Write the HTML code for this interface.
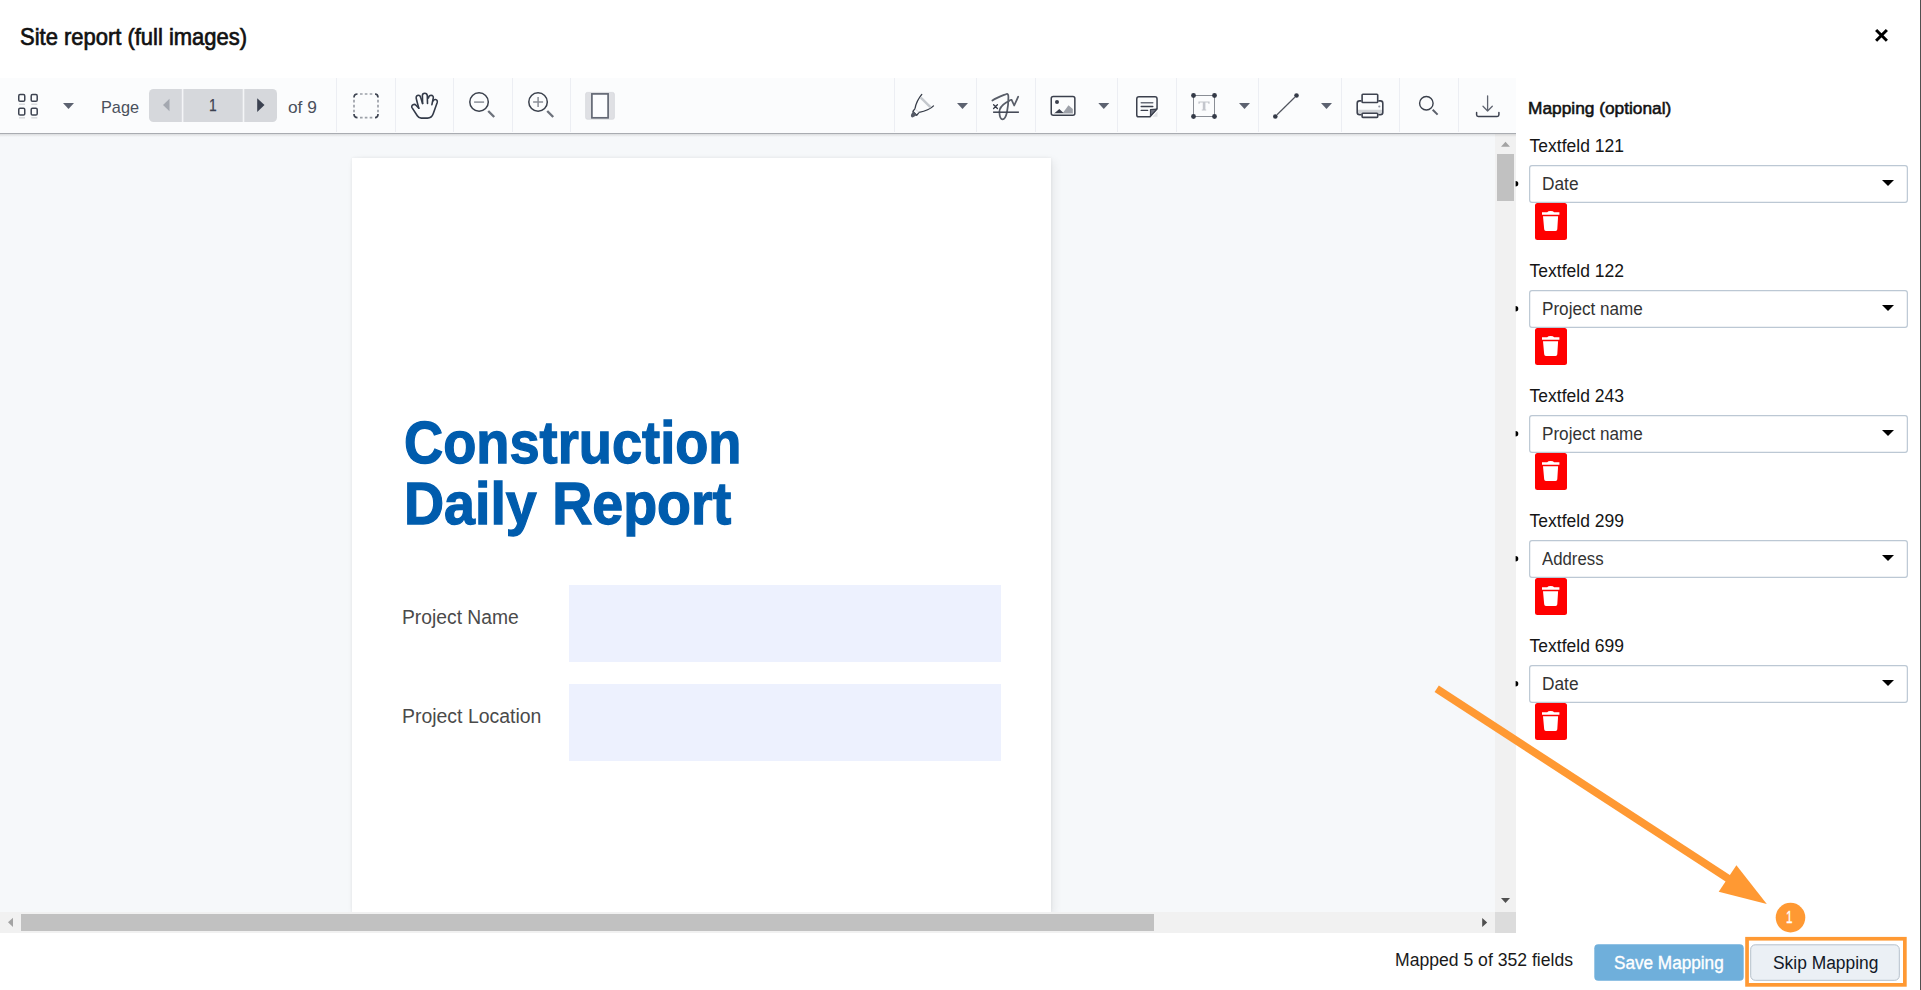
<!DOCTYPE html>
<html><head><meta charset="utf-8">
<style>
html,body{margin:0;padding:0;width:1921px;height:990px;overflow:hidden;background:#ffffff;}
body{position:relative;font-family:"Liberation Sans", sans-serif;}
.t{position:absolute;white-space:nowrap;line-height:1;transform-origin:0 0;}
.abs{position:absolute;}
</style></head><body>
<div class="abs" style="left:0;top:78px;width:1516px;height:55px;background:#fbfcfd;"></div>
<div class="abs" style="left:0;top:133px;width:1495px;height:779px;background:#f6f8fa;"></div>
<div class="abs" style="left:352px;top:158px;width:699px;height:754px;background:#ffffff;box-shadow:0 0 3px rgba(0,0,0,0.07), 3px 3px 9px rgba(0,0,0,0.07);"></div>
<div class="abs" style="left:569px;top:585px;width:432px;height:77px;background:#edf1fe;"></div>
<div class="abs" style="left:569px;top:684px;width:432px;height:77px;background:#edf1fe;"></div>
<div class="abs" style="left:1495px;top:133px;width:21px;height:779px;background:#f1f1f1;"></div>
<div class="abs" style="left:0;top:912px;width:1495px;height:21px;background:#f1f1f1;"></div>
<div class="abs" style="left:1495px;top:912px;width:21px;height:21px;background:#dcdcdc;"></div>
<div class="abs" style="left:1497px;top:154px;width:17px;height:47px;background:#c1c1c1;"></div>
<div class="abs" style="left:21px;top:914px;width:1133px;height:17px;background:#c1c1c1;"></div>
<div class="abs" style="left:0;top:133px;width:1516px;height:1px;background:#a9acb1;"></div>
<div class="abs" style="left:0;top:134px;width:1516px;height:3px;background:linear-gradient(rgba(0,0,0,0.11),rgba(0,0,0,0));"></div>
<div class="abs" style="left:1920px;top:0;width:1px;height:990px;background:#505050;"></div>
<svg class="abs" style="left:0;top:0" width="1921" height="990" viewBox="0 0 1921 990">
<!-- close X -->
<path d="M1876.1 30 L1886.9 40.8 M1886.9 30 L1876.1 40.8" stroke="#000" stroke-width="3" stroke-linecap="butt"/>
<!-- toolbar separators -->
<g fill="#eceef3">
<rect x="336" y="78" width="1" height="54"/><rect x="395" y="78" width="1" height="54"/><rect x="453" y="78" width="1" height="54"/><rect x="512" y="78" width="1" height="54"/><rect x="570" y="78" width="1" height="54"/>
<rect x="894" y="78" width="1" height="54"/><rect x="976" y="78" width="1" height="54"/><rect x="1035" y="78" width="1" height="54"/><rect x="1117" y="78" width="1" height="54"/><rect x="1176" y="78" width="1" height="54"/>
<rect x="1258" y="78" width="1" height="54"/><rect x="1341" y="78" width="1" height="54"/><rect x="1399" y="78" width="1" height="54"/><rect x="1458" y="78" width="1" height="54"/>
</g>
<!-- grid icon -->
<g fill="none" stroke="#3e4452" stroke-width="1.5">
<rect x="18.75" y="94.6" width="6" height="6.6" rx="1.3"/>
<rect x="31.2" y="94.6" width="6" height="6.6" rx="1.3"/>
<rect x="18.75" y="108.2" width="6" height="6.8" rx="1.3"/>
<rect x="31.2" y="108.2" width="6" height="6.8" rx="1.3"/>
</g>
<g fill="#d2d4d8"><rect x="19" y="103.6" width="6" height="1.2"/><rect x="31.3" y="103.6" width="6" height="1.2"/><rect x="19" y="117.2" width="6" height="1.3"/><rect x="31.3" y="117.2" width="6" height="1.3"/></g>
<!-- dropdown arrows -->
<g fill="#5c6270">
<path d="M63 103 L74 103 L68.5 109 Z"/>
<path d="M957 103 L968 103 L962.5 109 Z"/>
<path d="M1098.3 103 L1109.3 103 L1103.8 109 Z"/>
<path d="M1239 103 L1250 103 L1244.5 109 Z"/>
<path d="M1321 103 L1332 103 L1326.5 109 Z"/>
</g>
<!-- nav box -->
<rect x="149" y="89" width="128" height="33" rx="4.5" fill="#d6d8dc"/>
<rect x="181.8" y="89" width="1.6" height="33" fill="#f4f5f7"/>
<rect x="242.7" y="89" width="1.6" height="33" fill="#f4f5f7"/>
<path d="M169.5 98.8 L169.5 111.3 L163 105 Z" fill="#a4a8b0"/>
<path d="M257.2 98.2 L257.2 112 L264.5 105.1 Z" fill="#3b4150"/>
<!-- marquee -->
<g fill="none" stroke-width="1.7">
<path d="M354 97.5 Q354 94 357.5 94" stroke="#3d4350"/>
<path d="M375 94 Q378 94 378 97.5" stroke="#3d4350"/>
<path d="M354 114 Q354 117.6 357.5 117.6" stroke="#3d4350"/>
<path d="M375 117.6 Q378 117.6 378 114" stroke="#3d4350"/>
<path d="M360 94 h2.6 M364.8 94 h2.6 M369.7 94 h2.6 M360 117.6 h2.6 M364.8 117.6 h2.6 M369.7 117.6 h2.6 M354 99.8 v2.6 M354 104.8 v2.6 M354 109.7 v2.6 M378 99.8 v2.6 M378 104.8 v2.6 M378 109.7 v2.6" stroke="#9ca0a8"/>
</g>
<!-- hand -->
<g transform="translate(405,88)" fill="none" stroke="#333a48" stroke-width="1.6" stroke-linejoin="round" stroke-linecap="round">
<path d="M13.8,20.2 C12.8,16.5 11.6,12.5 11.2,10.2 C10.9,8.3 12,7.2 13.5,7.2 C14.8,7.2 15.4,8 15.7,9.5 L17.6,15.5"/>
<path d="M17.6,15.5 L17.4,7.6 C17.4,6.2 18.4,5.3 19.8,5.3 C21.2,5.3 22.1,6.1 22.3,7.6 L22.5,15.5"/>
<path d="M23.4,10 C23.8,8.2 24.8,7.3 26.2,7.3 C27.7,7.4 28.5,8.5 28.3,10 L26.9,16.7"/>
<path d="M28.1,12.8 C28.6,11.9 29.5,11.4 30.5,11.5 C31.9,11.7 32.6,12.9 32.2,14.4 L28.2,25.8 C27.5,27.8 25.8,30.1 22.5,30.1 L16.2,30.1 C14.5,30.1 13.2,29.2 12.3,27.8 L7,19.6 C6.4,18.6 6.9,17.4 8,16.8 C9,16.2 10.2,16.4 11,17.2 L13.8,20.2"/>
</g>
<!-- zoom out -->
<circle cx="479.05" cy="102.05" r="9.25" fill="none" stroke="#3a404c" stroke-width="1.5"/>
<path d="M474.1 102.1 H484.1" stroke="#8a8f98" stroke-width="1.5"/>
<path d="M488.2 111 L494.2 117" stroke="#6c717b" stroke-width="2.4"/>
<!-- zoom in -->
<circle cx="538.05" cy="102.05" r="9.25" fill="none" stroke="#3a404c" stroke-width="1.5"/>
<path d="M533.1 102.1 H543.1 M538.1 97.1 V107.1" stroke="#8a8f98" stroke-width="1.5"/>
<path d="M547.2 111 L553.2 117" stroke="#6c717b" stroke-width="2.4"/>
<!-- single page -->
<rect x="585.6" y="92.4" width="28.8" height="26.9" rx="1.8" fill="#dfe0e4" stroke="#d0d2d6" stroke-width="0.6"/>
<rect x="591.9" y="93.9" width="16.2" height="23.9" fill="#fcfdff" stroke="#636875" stroke-width="1.7"/>
<!-- highlighter -->
<g transform="translate(905,88)" fill="none" stroke-linecap="round" stroke-linejoin="round">
<path d="M15.8,9.6 L25.4,19.1" stroke="#c4c8cd" stroke-width="2.4" stroke-linecap="butt"/>
<path d="M16.8,6.4 C13,11 10.8,16 10,20.6 L7.9,23.4 L11.7,27.3 L14.1,24.4 C19,23.5 25,21.5 28.5,17.9" stroke="#363c48" stroke-width="1.3"/>
<path d="M10.2,21 L13.9,24.2" stroke="#d8dadf" stroke-width="1"/>
<path d="M7.9,23.6 L11.5,27.2 L8.6,29.1 Q7,29.8 6.2,28.8 Q5.6,27.8 6.2,26.2 Z" fill="#555a66" stroke="none"/>
</g>
<!-- signature -->
<g transform="translate(988,88)" fill="none" stroke-linecap="round" stroke-linejoin="round">
<path d="M4.4,12.5 C9,9.5 14.5,7.6 18.4,6 C19.8,5.5 20.4,6.8 20.4,9 C20.4,14 20,19.5 19,24 C18,28.5 16.5,31.3 14.6,31.3 C12.6,31.3 11.6,28.3 11.4,24.5 C11.2,21 13.8,17.2 18.2,14.5 L21,13 C22,12.2 22.9,11.5 23.6,11.8 L26.2,17.5 L30.2,8.7" stroke="#585d68" stroke-width="1.75"/>
<path d="M5.6,16.8 L9.4,20.5 M9.4,16.8 L5.6,20.5" stroke="#333845" stroke-width="1.3"/>
<path d="M5.1,24.2 H30.9" stroke="#3d4250" stroke-width="1.5" stroke-linecap="butt"/>
</g>
<!-- image -->
<g transform="translate(1046,90)">
<rect x="5.25" y="6.55" width="23.6" height="18.6" rx="2" fill="none" stroke="#3b404d" stroke-width="1.5"/>
<circle cx="11" cy="12.1" r="2" fill="#3b404d"/>
<path d="M16.8,23 L22.5,15.2 L26.8,19.1 L26.8,23 Z" fill="#9da1a9"/>
<path d="M8.7,23 L13.3,19.1 L17.6,23 Z" fill="#3b404d"/>
<rect x="8" y="23" width="19" height="0.8" fill="#c8cbd0"/>
</g>
<!-- note -->
<g transform="translate(1130,90)">
<path d="M20,26.8 L8.5,26.8 Q6.75,26.8 6.75,25 L6.75,9 Q6.75,6.8 9,6.8 L25,6.8 Q27.05,6.8 27.05,9 L27.05,18.5 Z" fill="none" stroke="#3b404d" stroke-width="1.5" stroke-linejoin="round"/>
<path d="M20.5,19.5 L27,19.2 L20.5,25.8 Z" fill="#6e7380" stroke="#3b404d" stroke-width="1.2" stroke-linejoin="round"/>
<path d="M22.5,26.8 L27.5,21.5 L27.5,26.8 Z" fill="#e2e4e7"/>
<path d="M11.2,12.8 H22.8" stroke="#6a6f7a" stroke-width="1.4" stroke-linecap="round"/>
<path d="M11.2,16.5 H22.8 M11.2,20.4 H17.6" stroke="#3b404d" stroke-width="1.4" stroke-linecap="round"/>
</g>
<!-- text box -->
<g transform="translate(1186,88)">
<rect x="7.5" y="7.5" width="21" height="21" fill="none" stroke="#8a8e96" stroke-width="1"/>
<circle cx="7.5" cy="7.5" r="2.4" fill="#343a47"/><circle cx="28.5" cy="7.5" r="2.4" fill="#343a47"/><circle cx="7.5" cy="28.5" r="2.4" fill="#343a47"/><circle cx="28.5" cy="28.5" r="2.4" fill="#343a47"/>
<path d="M12.4,13.5 H23.6 V15.8 H22.4 L22,14.6 H19.4 V21.4 H20.2 V22.6 H15.8 V21.4 H16.8 V14.6 H14 L13.6,15.8 H12.4 Z" fill="#c3c6cc"/>
</g>
<!-- line tool -->
<g transform="translate(1268,88)">
<path d="M9,26.8 L26.8,9.2" stroke="#50545e" stroke-width="1.2"/>
<circle cx="28.5" cy="7.5" r="2.3" fill="#343a47"/><circle cx="7.3" cy="28.5" r="2.3" fill="#343a47"/>
</g>
<!-- printer -->
<g transform="translate(1350,88)" stroke="#3e4350" stroke-width="1.6" stroke-linejoin="round">
<path d="M7.2,21.8 H32.8 V25 Q32.8,26.8 31,26.8 L9,26.8 Q7.2,26.8 7.2,25 Z" fill="#d0d3d7" stroke="none"/>
<path d="M11.5,12.9 L9.5,12.9 Q7.2,12.9 7.2,15.2 L7.2,24.6 Q7.2,26.8 9.5,26.8 L11.5,26.8 M28.3,12.9 L30.5,12.9 Q32.8,12.9 32.8,15.2 L32.8,24.6 Q32.8,26.8 30.5,26.8 L28.3,26.8" fill="none"/>
<rect x="12.1" y="6.3" width="15.6" height="8.2" rx="0.8" fill="#fcfdff"/>
<rect x="12.1" y="25.2" width="15.6" height="4.2" rx="0.8" fill="#fcfdff"/>
<circle cx="29.3" cy="18.5" r="1.1" fill="#9094a0" stroke="none"/>
</g>
<!-- search -->
<circle cx="1426.35" cy="103.25" r="6.75" fill="none" stroke="#3a404c" stroke-width="1.4"/>
<path d="M1432.7 109.7 L1437.6 114.6" stroke="#5a5f6a" stroke-width="2"/>
<!-- download -->
<g transform="translate(1470,88)" fill="none" stroke-linecap="round" stroke-linejoin="round">
<path d="M17.6,7.8 V23 M13,18.3 L17.6,23 L22.3,18.3" stroke="#5f6470" stroke-width="1.3"/>
<path d="M6.6,24.6 V26.8 Q6.6,28.5 8.3,28.5 L27.2,28.5 Q28.9,28.5 28.9,26.8 V24.6" stroke="#3d4250" stroke-width="1.5"/>
</g>
<!-- scrollbar arrows -->
<path d="M1501 146.8 L1510 146.8 L1505.5 141.8 Z" fill="#a3a3a3"/>
<path d="M1501 898 L1510 898 L1505.5 903 Z" fill="#505050"/>
<path d="M13 917.7 L13 927 L8 922.35 Z" fill="#a3a3a3"/>
<path d="M1482.2 917.9 L1482.2 927 L1487.2 922.45 Z" fill="#505050"/>
<!-- panel selects -->
<g id="selects">
<rect x="1529.65" y="165.65" width="377.70" height="36.70" rx="2.3" fill="#ffffff" stroke="#bcc8d4" stroke-width="1.2"/>
<path d="M1882 180.00 L1894 180.00 L1888 186.00 Z" fill="#000"/>
<path d="M1515.6 181.00 A2.7 2.7 0 0 1 1515.6 186.40 Z" fill="#000"/>
<rect x="1535" y="203.00" width="32" height="37" rx="2.5" fill="#ff0000"/>
<path d="M1542 212.20 H1547.2 Q1548 210.90 1550.6 210.90 Q1553.3 210.90 1554.1 212.20 H1559.4 V214.70 H1542 Z" fill="#fff"/>
<path d="M1543 216.20 H1558.1 L1557.3 229.20 Q1557.2 230.90 1555.6 230.90 H1545.9 Q1544.3 230.90 1544.2 229.20 Z" fill="#fff"/>
<rect x="1529.65" y="290.65" width="377.70" height="36.70" rx="2.3" fill="#ffffff" stroke="#bcc8d4" stroke-width="1.2"/>
<path d="M1882 305.00 L1894 305.00 L1888 311.00 Z" fill="#000"/>
<path d="M1515.6 306.00 A2.7 2.7 0 0 1 1515.6 311.40 Z" fill="#000"/>
<rect x="1535" y="328.00" width="32" height="37" rx="2.5" fill="#ff0000"/>
<path d="M1542 337.20 H1547.2 Q1548 335.90 1550.6 335.90 Q1553.3 335.90 1554.1 337.20 H1559.4 V339.70 H1542 Z" fill="#fff"/>
<path d="M1543 341.20 H1558.1 L1557.3 354.20 Q1557.2 355.90 1555.6 355.90 H1545.9 Q1544.3 355.90 1544.2 354.20 Z" fill="#fff"/>
<rect x="1529.65" y="415.65" width="377.70" height="36.70" rx="2.3" fill="#ffffff" stroke="#bcc8d4" stroke-width="1.2"/>
<path d="M1882 430.00 L1894 430.00 L1888 436.00 Z" fill="#000"/>
<path d="M1515.6 431.00 A2.7 2.7 0 0 1 1515.6 436.40 Z" fill="#000"/>
<rect x="1535" y="453.00" width="32" height="37" rx="2.5" fill="#ff0000"/>
<path d="M1542 462.20 H1547.2 Q1548 460.90 1550.6 460.90 Q1553.3 460.90 1554.1 462.20 H1559.4 V464.70 H1542 Z" fill="#fff"/>
<path d="M1543 466.20 H1558.1 L1557.3 479.20 Q1557.2 480.90 1555.6 480.90 H1545.9 Q1544.3 480.90 1544.2 479.20 Z" fill="#fff"/>
<rect x="1529.65" y="540.65" width="377.70" height="36.70" rx="2.3" fill="#ffffff" stroke="#bcc8d4" stroke-width="1.2"/>
<path d="M1882 555.00 L1894 555.00 L1888 561.00 Z" fill="#000"/>
<path d="M1515.6 556.00 A2.7 2.7 0 0 1 1515.6 561.40 Z" fill="#000"/>
<rect x="1535" y="578.00" width="32" height="37" rx="2.5" fill="#ff0000"/>
<path d="M1542 587.20 H1547.2 Q1548 585.90 1550.6 585.90 Q1553.3 585.90 1554.1 587.20 H1559.4 V589.70 H1542 Z" fill="#fff"/>
<path d="M1543 591.20 H1558.1 L1557.3 604.20 Q1557.2 605.90 1555.6 605.90 H1545.9 Q1544.3 605.90 1544.2 604.20 Z" fill="#fff"/>
<rect x="1529.65" y="665.65" width="377.70" height="36.70" rx="2.3" fill="#ffffff" stroke="#bcc8d4" stroke-width="1.2"/>
<path d="M1882 680.00 L1894 680.00 L1888 686.00 Z" fill="#000"/>
<path d="M1515.6 681.00 A2.7 2.7 0 0 1 1515.6 686.40 Z" fill="#000"/>
<rect x="1535" y="703.00" width="32" height="37" rx="2.5" fill="#ff0000"/>
<path d="M1542 712.20 H1547.2 Q1548 710.90 1550.6 710.90 Q1553.3 710.90 1554.1 712.20 H1559.4 V714.70 H1542 Z" fill="#fff"/>
<path d="M1543 716.20 H1558.1 L1557.3 729.20 Q1557.2 730.90 1555.6 730.90 H1545.9 Q1544.3 730.90 1544.2 729.20 Z" fill="#fff"/>
</g>
<!-- buttons -->
<rect x="1594.3" y="944.3" width="149.4" height="36.5" rx="4" fill="#6fafdb"/>
<rect x="1750.7" y="944.8" width="148.6" height="35.5" rx="4.5" fill="#ebf0f5" stroke="#b5c0cb" stroke-width="1"/>
<rect x="1747.05" y="938.75" width="157.8" height="46.1" fill="none" stroke="#ff9933" stroke-width="3.7"/>
<!-- annotation arrow -->
<path d="M1436.7 688.7 L1740 886.3" stroke="#ff9933" stroke-width="7.8" stroke-linecap="butt"/>
<path d="M1766.8 904.1 L1736.4 865.2 L1718.7 891.7 Z" fill="#ff9933"/>
<circle cx="1790.5" cy="917.6" r="14.8" fill="#ff9933"/>
</svg>

<span id="title" class="t" style="left:20.10px;top:24.98px;font-size:24px;font-weight:400;color:#111111;transform:scaleX(0.9150);-webkit-text-stroke:0.7px #111111">Site report (full images)</span>
<span id="page" class="t" style="left:100.98px;top:98.71px;font-size:17px;font-weight:400;color:#4a505c;transform:scaleX(0.9579)">Page</span>
<span id="pnum" class="t" style="left:209.26px;top:97.21px;font-size:17px;font-weight:400;color:#3c4250;transform:scaleX(0.8125);-webkit-text-stroke:0.25px #3c4250">1</span>
<span id="of9" class="t" style="left:288.36px;top:98.81px;font-size:17px;font-weight:400;color:#4a505c;transform:scaleX(1.0179)">of 9</span>
<span id="maph" class="t" style="left:1528.49px;top:99.81px;font-size:17px;font-weight:400;color:#111111;transform:scaleX(1.0179);-webkit-text-stroke:0.55px #111111">Mapping (optional)</span>
<span id="cons" class="t" style="left:404.14px;top:413.20px;font-size:60px;font-weight:700;color:#005cad;transform:scaleX(0.9041);-webkit-text-stroke:1.3px #005cad">Construction</span>
<span id="daily" class="t" style="left:403.99px;top:474.40px;font-size:60px;font-weight:700;color:#005cad;transform:scaleX(0.9257);-webkit-text-stroke:1.3px #005cad">Daily Report</span>
<span id="pname" class="t" style="left:401.86px;top:606.57px;font-size:20px;font-weight:400;color:#4a4a4a;transform:scaleX(0.9639)">Project Name</span>
<span id="ploc" class="t" style="left:401.75px;top:705.57px;font-size:20px;font-weight:400;color:#4a4a4a;transform:scaleX(0.9716)">Project Location</span>
<span id="mapped" class="t" style="left:1395.31px;top:952.38px;font-size:17.5px;font-weight:400;color:#1a1a1a;transform:scaleX(1.0051)">Mapped 5 of 352 fields</span>
<span id="save" class="t" style="left:1614.27px;top:953.66px;font-size:18px;font-weight:400;color:#ffffff;transform:scaleX(0.9531);-webkit-text-stroke:0.35px #ffffff">Save Mapping</span>
<span id="skip" class="t" style="left:1772.65px;top:953.66px;font-size:18px;font-weight:400;color:#111827;transform:scaleX(0.9664)">Skip Mapping</span>
<span id="badge" class="t" style="left:1785.75px;top:909.11px;font-size:17px;font-weight:400;color:#ffffff;transform:scaleX(0.6875);-webkit-text-stroke:0.3px #ffffff">1</span>
<span id="lab0" class="t" style="left:1529.57px;top:137.88px;font-size:17.5px;font-weight:400;color:#151515;transform:scaleX(1.0000)">Textfeld 121</span>
<span id="val0" class="t" style="left:1542.43px;top:175.98px;font-size:17.5px;font-weight:400;color:#333333;transform:scaleX(0.9889)">Date</span>
<span id="lab1" class="t" style="left:1529.57px;top:262.88px;font-size:17.5px;font-weight:400;color:#151515;transform:scaleX(1.0000)">Textfeld 122</span>
<span id="val1" class="t" style="left:1542.30px;top:300.98px;font-size:17.5px;font-weight:400;color:#333333;transform:scaleX(0.9784)">Project name</span>
<span id="lab2" class="t" style="left:1529.57px;top:387.88px;font-size:17.5px;font-weight:400;color:#151515;transform:scaleX(1.0000)">Textfeld 243</span>
<span id="val2" class="t" style="left:1542.30px;top:425.98px;font-size:17.5px;font-weight:400;color:#333333;transform:scaleX(0.9784)">Project name</span>
<span id="lab3" class="t" style="left:1529.57px;top:512.88px;font-size:17.5px;font-weight:400;color:#151515;transform:scaleX(1.0000)">Textfeld 299</span>
<span id="val3" class="t" style="left:1541.79px;top:550.98px;font-size:17.5px;font-weight:400;color:#333333;transform:scaleX(0.9594)">Address</span>
<span id="lab4" class="t" style="left:1529.57px;top:637.88px;font-size:17.5px;font-weight:400;color:#151515;transform:scaleX(1.0000)">Textfeld 699</span>
<span id="val4" class="t" style="left:1542.43px;top:675.98px;font-size:17.5px;font-weight:400;color:#333333;transform:scaleX(0.9889)">Date</span>
</body></html>
